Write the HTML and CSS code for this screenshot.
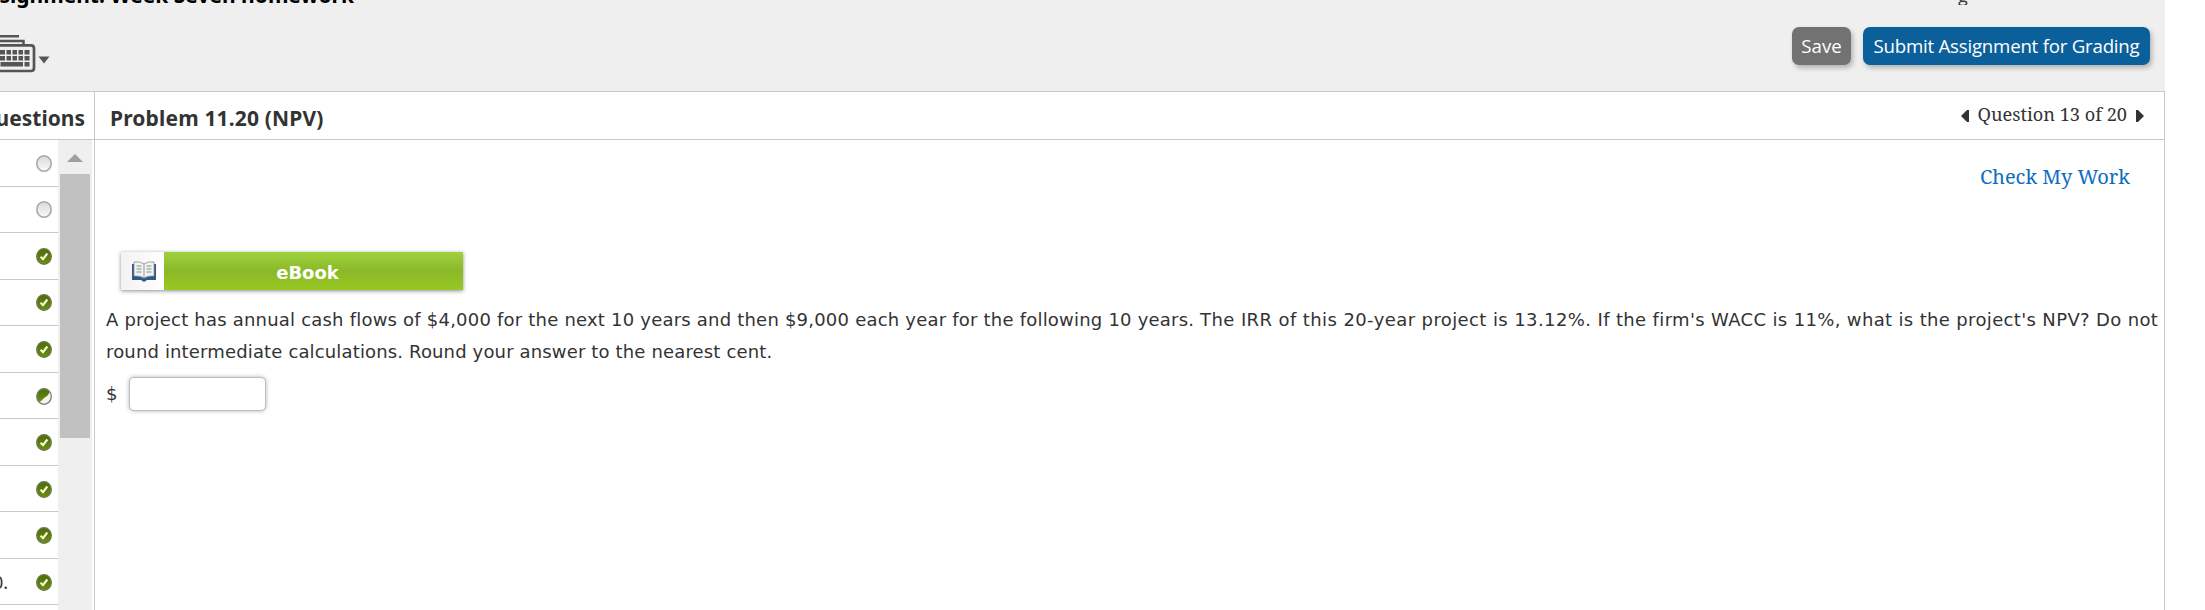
FILE: index.html
```
<!DOCTYPE html>
<html lang="en">
<head>
<meta charset="utf-8">
<title>Problem 11.20 (NPV)</title>
<link rel="stylesheet" href="styles.css">
</head>
<body>
<svg class="defs" width="0" height="0" aria-hidden="true">
  <defs>
    <linearGradient id="silver" x1="0" y1="0" x2="0" y2="1"><stop offset="0" stop-color="#d9d9d9"/><stop offset="1" stop-color="#fafafa"/></linearGradient>
    <linearGradient id="olive" x1="0" y1="0" x2="0" y2="1"><stop offset="0" stop-color="#4c6b0c"/><stop offset="1" stop-color="#6a8f10"/></linearGradient>
    <symbol id="empty" viewBox="0 0 16 17"><ellipse cx="8" cy="8.5" rx="7.2" ry="7.7" fill="url(#silver)" stroke="#a6a6a6" stroke-width="1.6"/></symbol>
    <symbol id="done" viewBox="0 0 16 17"><ellipse cx="8" cy="8.5" rx="7.3" ry="7.8" fill="url(#olive)" stroke="#6c7b4b" stroke-width="1.3"/><path d="M4.6 8.8 7 11.2 11.3 5.5" fill="none" stroke="#fafbd8" stroke-width="2.1"/></symbol>
    <symbol id="partial" viewBox="0 0 16 17"><ellipse cx="8" cy="8.5" rx="7.3" ry="7.8" fill="#f4f4ee"/><path d="M2.4 14 Q.6 11 .7 8.5 A7.3 7.8 0 0 1 13.6 3.5 Q12.5 8 8 10 Q6 13 2.4 14Z" fill="url(#olive)"/><ellipse cx="8" cy="8.5" rx="7.3" ry="7.8" fill="none" stroke="#77806a" stroke-width="1.3"/></symbol>
  </defs>
</svg>
<div class="app">
  <header class="top">
    <div class="top-left">
      <div class="assignment"><span>Assignment: Week Seven homework</span></div>
      <div class="tools">
        <svg class="keyboard" width="36" height="40" viewBox="0 0 36 40">
          <g fill="none" stroke="#555" stroke-width="2.5"><path d="M0 2.2H19M0 7H23.5V11"/><path d="M0 11.4H31Q34 11.4 34 14.4V34Q34 37 31 37H0" stroke-width="2.7"/></g>
          <path fill="#555" d="M0 16h5v4.5H0zM6.5 16H11v4.5H6.5zM12.5 16H17v4.5h-4.5zM18.5 16H23v4.5h-4.5zM24.5 16H29.5v4.5h-5zM0 22h5v4.5H0zM6.5 22H11v4.5H6.5zM12.5 22H17v4.5h-4.5zM18.5 22H23v4.5h-4.5zM24.5 22H29.5v4.5h-5zM.5 28H23v4.5H.5zM24.5 28H29.5v4.5h-5z"/>
        </svg>
        <svg class="caret" width="12" height="8" viewBox="0 0 12 8"><path d="M.5.5h11L6 7.5z" fill="#555"/></svg>
      </div>
    </div>
    <div class="top-right">
      <div class="score"><span>g</span></div>
      <div class="actions">
        <button class="btn save"><span>Save</span></button>
        <button class="btn submit"><span>Submit Assignment for Grading</span></button>
      </div>
    </div>
  </header>
  <div class="body">
    <aside class="side">
      <h2 class="side-title"><span>Questions</span></h2>
      <div class="side-main">
        <ul class="list">
          <li><svg><use href="#empty"/></svg></li>
          <li><svg><use href="#empty"/></svg></li>
          <li><svg><use href="#done"/></svg></li>
          <li><svg><use href="#done"/></svg></li>
          <li><svg><use href="#done"/></svg></li>
          <li><svg><use href="#partial"/></svg></li>
          <li><svg><use href="#done"/></svg></li>
          <li><svg><use href="#done"/></svg></li>
          <li><svg><use href="#done"/></svg></li>
          <li><span class="num">0.</span><svg><use href="#done"/></svg></li>
          <li></li>
        </ul>
        <div class="scroll"><svg width="16" height="8" viewBox="0 0 16 8"><path d="M0 8 8 0l8 8z" fill="#a0a0a0"/></svg><div class="thumb"></div></div>
      </div>
    </aside>
    <main class="main">
      <div class="main-head">
        <h1 class="title">Problem 11.20 (NPV)</h1>
        <nav class="pager">
          <svg width="8" height="12" viewBox="0 0 8 12"><path d="M8 0v12H6L0 6 6 0z" fill="#333"/></svg>
          <span class="count">Question 13 of 20</span>
          <svg width="8" height="12" viewBox="0 0 8 12"><path d="M0 0v12h2l6-6-6-6z" fill="#333"/></svg>
        </nav>
      </div>
      <div class="content">
        <a class="check">Check My Work</a>
        <div class="ebook">
          <div class="ebook-icon">
            <svg width="26" height="22" viewBox="0 0 26 22"><path d="M1 3h24v16H16l-3 2-3-2H1z" fill="#315a88"/><path d="M3 1Q9 0 13 3 17 0 23 1V15Q17 14.5 13 17 9 14.5 3 15z" fill="#f3f4f1" stroke="#7c9097" stroke-width=".8"/><path d="M13 3v14M5.5 5h5M5.5 8h5M5.5 11h5M15.5 5h5M15.5 8h5M15.5 11h5" stroke="#a9b0af" stroke-width="1.3"/></svg>
          </div>
          <div class="ebook-label">eBook</div>
        </div>
        <p class="text"><span class="s1">A project has annual cash flows of $4,000 for the next 10 years and then $9,000 each year for the following 10 years. </span><span class="s2">The IRR of this 20-year project is 13.12%. </span><span class="s3">If the firm's WACC is 11%, what is the project's NPV? Do not</span><br><span class="s4">round intermediate calculations. Round your answer to the nearest cent.</span></p>
        <div class="answer"><span>$</span><input type="text" aria-label="Answer"></div>
      </div>
    </main>
  </div>
</div>
</body>
</html>
```
FILE: styles.css
```
* { box-sizing: border-box; }
body { margin: 0; background: #fff; color: #333; overflow: hidden; }
.defs { display: block; height: 0; }
.app { width: 2165px; height: 610px; overflow: hidden; display: flex; flex-direction: column; }
.top { height: 92px; flex: none; background: #efefef; border-bottom: 1px solid #c8c8c8; display: flex; justify-content: space-between; }
.assignment { height: 8px; width: 354px; overflow: hidden; display: flex; justify-content: flex-end; align-items: flex-end; white-space: nowrap; font: bold 21px/28px "Noto Sans", sans-serif; color: #000; }
.assignment span { flex: none; margin-bottom: -1px; }
.tools { display: flex; padding-top: 26px; }
.keyboard { flex: none; }
.caret { margin: 22px 0 0 2px; }
.top-right { display: flex; flex-direction: column; align-items: flex-end; }
.score { height: 5px; width: 207px; overflow: hidden; display: flex; align-items: flex-end; font: 18px/24px "Open Sans", sans-serif; }
.score span { margin-bottom: -2px; }
.actions { display: flex; gap: 12px; padding: 22px 15px 0 0; }
.btn { height: 38px; border: 0; border-radius: 7px; padding: 0; color: #fff; font: 18.67px/38px "Open Sans", sans-serif; box-shadow: 2px 3px 5px rgba(0,0,0,.25); white-space: nowrap; }
.save { width: 59px; background: #727272; }
.submit { width: 287px; background: #0b5f9a; letter-spacing: -.22px; }
.body { display: flex; flex: 1; min-height: 0; }
.side { width: 95px; flex: none; border-right: 1px solid #c8c8c8; display: flex; flex-direction: column; }
.side-title { margin: 0; height: 48px; flex: none; border-bottom: 1px solid #c8c8c8; overflow: hidden; display: flex; justify-content: flex-end; padding-right: 9px; font: bold 21px/53px "Noto Sans", sans-serif; }
.side-main { display: flex; flex: 1; min-height: 0; }
.list { list-style: none; margin: 0; padding: 0; width: 58px; overflow: hidden; }
.list li { height: 46.56px; border-bottom: 1px solid #c8c8c8; display: flex; justify-content: flex-end; align-items: center; padding-right: 6px; }
.list svg { width: 16px; height: 17px; flex: none; margin-top: 1px; }
.num { font: 18px/24px "Noto Sans", sans-serif; margin-right: 28px; color: #333; }
.scroll { width: 34px; background: #efefef; display: flex; flex-direction: column; align-items: center; padding-top: 14px; margin-right: 2px; }
.scroll svg { flex: none; }
.thumb { width: 30px; height: 264px; margin-top: 12px; background: #c1c1c1; }
.main { flex: 1; border-right: 1px solid #c8c8c8; min-width: 0; }
.main-head { height: 48px; border-bottom: 1px solid #c8c8c8; display: flex; justify-content: space-between; padding: 0 20px 0 15px; }
.title { margin: 0; font: bold 21px/53px "Noto Sans", sans-serif; letter-spacing: .16px; }
.pager { display: flex; align-items: center; gap: 9px; }
.count { font: 18.2px/42px "Noto Serif", "DejaVu Serif Condensed", "DejaVu Serif", serif; margin-bottom: 3px; }
.content { padding: 0 8px 0 11px; display: flex; flex-direction: column; }
.check { align-self: flex-end; margin: 22px 26px 0 0; color: #0f6cbf; font: 20px/30px "Noto Serif", "DejaVu Serif Condensed", "DejaVu Serif", serif; white-space: nowrap; }
.ebook { margin: 60px 0 0 15px; width: 342px; height: 38px; display: flex; box-shadow: 0 1px 4px rgba(0,0,0,.45); }
.ebook-icon { width: 43px; display: flex; align-items: center; justify-content: center; padding: 2px 0 0 2px; background: linear-gradient(90deg, #f2f2f4, #fff); }
.ebook-label { flex: 1; background: linear-gradient(#9fd23f, #8bb828 50%, #98c822); color: #fff; font: bold 18px/42px "DejaVu Sans", sans-serif; text-align: center; padding-right: 12px; }
.text { margin: 14px 0 0; font: 18px/32px "DejaVu Sans", sans-serif; white-space: nowrap; }
.s1 { letter-spacing: .21px; }
.s2 { letter-spacing: .4px; }
.s3 { letter-spacing: .35px; }
.s4 { letter-spacing: .15px; }
.answer { display: flex; align-items: center; margin-top: 9px; font: 18px/34px "DejaVu Sans", sans-serif; }
.answer input { width: 137px; height: 34px; margin-left: 12px; border: 1px solid #bdbdbd; border-radius: 5px; box-shadow: 0 0 4px rgba(0,0,0,.3); background: #fff; }
```
